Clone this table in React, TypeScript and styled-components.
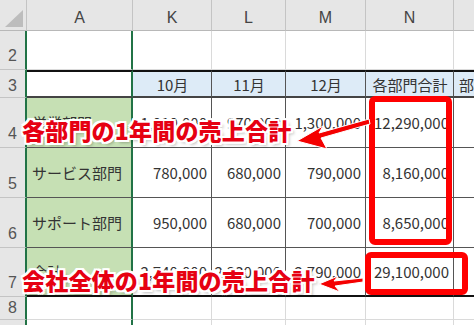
import { FC } from "react";
import styled, { createGlobalStyle } from "styled-components";

const GlobalStyle = createGlobalStyle`
  html, body { margin: 0; padding: 0; background: #fff; overflow: hidden; }
  body { font-family: "Noto Sans CJK JP", "Noto Sans", sans-serif; }
`;

const COLS = [27, 106, 79, 74, 80, 88, 40];
const ROWS = [31, 39, 28, 50, 50, 50, 49, 23, 30];

const Frame = styled.div`
  position: relative;
  width: 474px;
  height: 325px;
  overflow: hidden;
`;

const Sheet = styled.div`
  display: grid;
  grid-template-columns: ${COLS.map(c => c + "px").join(" ")};
  grid-template-rows: ${ROWS.map(r => r + "px").join(" ")};
  font-size: 15px;
  color: #333;
`;

const Corner = styled.div`
  background: #e6e6e6;
  border-right: 1px solid #c4c4c4;
  border-bottom: 1px solid #b8b8b8;
  box-sizing: border-box;
  display: flex;
  align-items: flex-end;
  justify-content: flex-end;
  padding: 0 3px 3px 0;
  &::after {
    content: "";
    width: 0;
    height: 0;
    border-left: 18px solid transparent;
    border-bottom: 17px solid #bdbdbd;
  }
`;

const ColHead = styled.div`
  background: #e6e6e6;
  border-right: 1px solid #c4c4c4;
  border-bottom: 1px solid #b8b8b8;
  box-sizing: border-box;
  display: flex;
  align-items: flex-end;
  justify-content: center;
  padding-bottom: 3px;
  color: #444;
  font-family: "Liberation Sans", "Noto Sans", sans-serif;
  font-size: 16px;
`;

const RowHead = styled.div<{ $tall?: boolean }>`
  background: #e6e6e6;
  border-right: 2px solid #217346;
  border-bottom: 1px solid #c4c4c4;
  box-sizing: border-box;
  display: flex;
  align-items: flex-end;
  justify-content: center;
  padding-bottom: ${p => (p.$tall ? 4 : 2)}px;
  color: #555;
  font-family: "Liberation Sans", "Noto Sans", sans-serif;
  font-size: 16px;
`;

type Kind = "blank" | "head" | "body" | "total" | "after";

const Cell = styled.div<{ $kind: Kind; $bg: string; $align: string; $sel?: boolean }>`
  box-sizing: border-box;
  background: ${p => p.$bg};
  display: flex;
  align-items: center;
  justify-content: ${p => p.$align};
  padding: 0 4px 0 5px;
  white-space: nowrap;
  overflow: hidden;
  border-right: ${p =>
    p.$sel ? "2px solid #217346"
    : p.$kind === "blank" || p.$kind === "after" ? "1px solid #dadada"
    : "1px solid #555"};
  border-top: ${p => (p.$kind === "head" ? "2px solid #111" : "none")};
  border-bottom: ${p =>
    p.$kind === "head" ? "2px solid #444"
    : p.$kind === "body" ? "1px solid #555"
    : p.$kind === "total" ? "2px solid #111"
    : "1px solid #dadada"};
`;

const Callout = styled.div<{ $top: number }>`
  position: absolute;
  left: 22px;
  top: ${p => p.$top}px;
  font-size: 23px;
  line-height: 23px;
  font-weight: 900;
  color: #e60012;
  white-space: nowrap;
  letter-spacing: 0.2px;
  text-shadow:
    2px 0 0 #fff, -2px 0 0 #fff, 0 2px 0 #fff, 0 -2px 0 #fff,
    2px 2px 0 #fff, -2px -2px 0 #fff, 2px -2px 0 #fff, -2px 2px 0 #fff,
    3px 3px 3px rgba(0, 0, 0, 0.25);
`;

const Marks = styled.svg`
  position: absolute;
  left: 0;
  top: 0;
  pointer-events: none;
`;

const months = ["10月", "11月", "12月", "各部門合計", "部門平均"];
const data: [string, string[], Kind][] = [
  ["営業部門", ["1,010,000", "970,000", "1,300,000", "12,290,000", ""], "body"],
  ["サービス部門", ["780,000", "680,000", "790,000", "8,160,000", ""], "body"],
  ["サポート部門", ["950,000", "680,000", "700,000", "8,650,000", ""], "body"],
  ["合計", ["2,740,000", "2,330,000", "2,790,000", "29,100,000", ""], "total"],
];

const Blank: FC<{ kind?: Kind }> = ({ kind = "blank" }) => (
  <>
    {[0, 1, 2, 3, 4, 5].map(i => (
      <Cell key={i} $kind={kind} $bg="#fff" $align="flex-start" $sel={i === 0} />
    ))}
  </>
);

export default function App() {
  return (
    <Frame>
      <GlobalStyle />
      <Sheet>
        <Corner />
        {["A", "K", "L", "M", "N", ""].map((c, i) => (
          <ColHead key={i}>{c}</ColHead>
        ))}

        <RowHead $tall>2</RowHead>
        <Blank />

        <RowHead>3</RowHead>
        <Cell $kind="head" $bg="#fff" $align="flex-start" $sel />
        {months.map((m, i) => (
          <Cell key={m} $kind="head" $bg="#ddebf7" $align={i === 4 ? "flex-start" : "center"}>
            {m}
          </Cell>
        ))}

        {data.map(([label, vals, kind], r) => (
          <>
            <RowHead key={"h" + r} $tall>{r + 4}</RowHead>
            <Cell key={"a" + r} $kind={kind} $bg="#c6e0b4" $align="flex-start" $sel>
              {label}
            </Cell>
            {vals.map((v, i) => (
              <Cell key={r + "-" + i} $kind={kind} $bg="#fff" $align="flex-end">
                {v}
              </Cell>
            ))}
          </>
        ))}

        <RowHead>8</RowHead>
        <Blank kind="after" />
        <RowHead />
        <Blank kind="after" />
      </Sheet>

      <Marks width="474" height="325" viewBox="0 0 474 325">
        <rect x="372" y="99" width="77" height="143" rx="3" fill="none" stroke="#ff0000" strokeWidth="6" />
        <rect x="368" y="255" width="97" height="37" rx="3" fill="none" stroke="#ff0000" strokeWidth="6" />
        <polygon
          points="297,141 323,126 319,133 369,119 370,124 321,138 327,149"
          fill="#f40000"
          stroke="#fff"
          strokeWidth="1"
          strokeLinejoin="round"
        />
        <polygon
          points="319,284 338,276 334,281 363,278 363,282 335,286 340,292"
          fill="#f40000"
          stroke="#fff"
          strokeWidth="1"
          strokeLinejoin="round"
        />
      </Marks>

      <Callout $top={119}>各部門の1年間の売上合計</Callout>
      <Callout $top={269}>会社全体の1年間の売上合計</Callout>
    </Frame>
  );
}
